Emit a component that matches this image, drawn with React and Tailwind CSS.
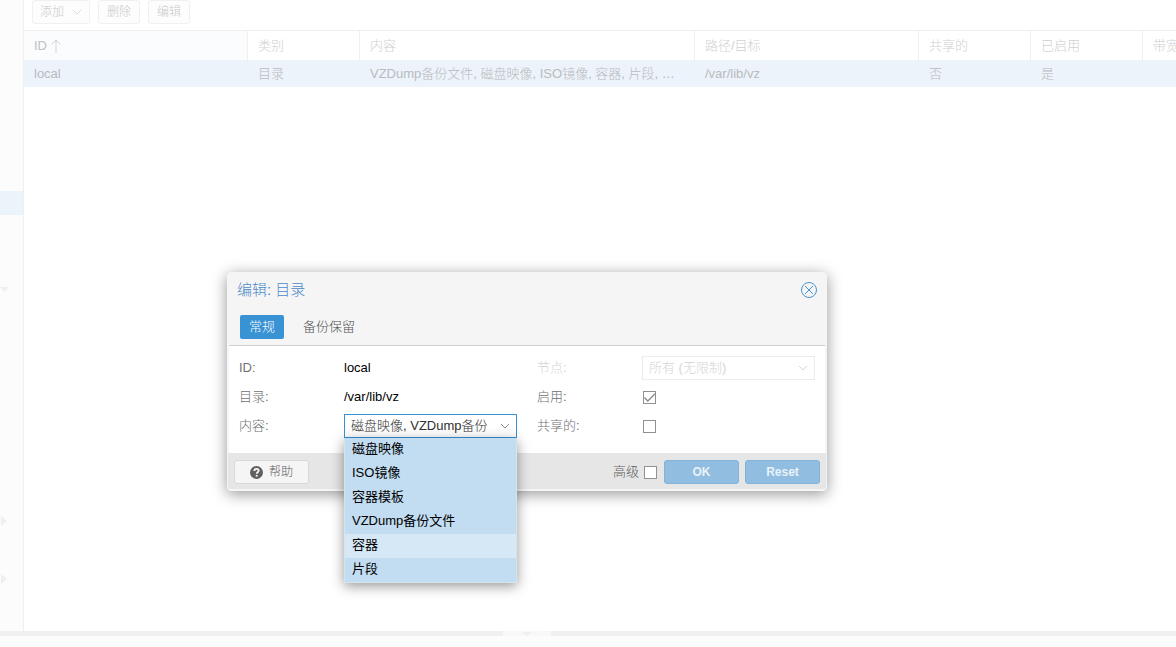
import { useState } from 'react';
import clsx from 'clsx';

const COLUMNS = [
  { key: 'type', label: '类别' },
  { key: 'content', label: '内容' },
  { key: 'path', label: '路径/目标' },
  { key: 'shared', label: '共享的' },
  { key: 'enabled', label: '已启用' },
  { key: 'bandwidth', label: '带宽限制' },
];

const STORAGES = [
  {
    id: 'local',
    type: '目录',
    content: 'VZDump备份文件, 磁盘映像, ISO镜像, 容器, 片段, 容器模板',
    path: '/var/lib/vz',
    shared: '否',
    enabled: '是',
    bandwidth: '',
  },
];

const CONTENT_TYPES = ['磁盘映像', 'ISO镜像', '容器模板', 'VZDump备份文件', '容器', '片段'];

export default function App() {
  return (
    <div className="relative flex min-h-screen flex-col overflow-hidden bg-white font-['Liberation_Sans','Noto_Sans_CJK_SC',sans-serif] text-[13px] font-light">
      <div className="flex flex-1">
        <Sidebar />
        <main className="min-w-0 flex-1 overflow-hidden">
          <Toolbar />
          <StorageTable />
        </main>
      </div>
      <div className="h-[5px] bg-[#f0f0f0] pl-[503px]">
        <div className="flex h-[5px] w-12 items-end justify-center bg-[#f8f8f8]">
          <svg width="10" height="4" viewBox="0 0 10 4" fill="#f0f0f0">
            <path d="M0 0h10L5 4z" />
          </svg>
        </div>
      </div>
      <div className="h-[11px] bg-[#fcfcfc]" />
      <EditDialog />
    </div>
  );
}

function Sidebar() {
  return (
    <aside className="flex w-6 flex-none flex-col border-r border-[#efefef] bg-[#fcfcfc] pt-[191px]">
      <div className="h-6 bg-[#ecf4fb]" />
      <svg className="mt-[72px]" width="9" height="5" viewBox="0 0 9 5" fill="#efefef">
        <path d="M0 0h9L4.500 5z" />
      </svg>
      <svg className="mt-[224px] ml-px" width="6" height="10" viewBox="0 0 6 10" fill="#efefef">
        <path d="M0 0v10l6-5z" />
      </svg>
      <svg className="mt-12 ml-px" width="6" height="10" viewBox="0 0 6 10" fill="#efefef">
        <path d="M0 0v10l6-5z" />
      </svg>
    </aside>
  );
}

function Toolbar() {
  const button = 'flex h-6 items-center rounded-[3px] border border-[#f0f0f0] bg-[#fdfdfd] px-[7px] text-xs text-[#c8c8c8]';
  return (
    <div className="flex gap-2 px-2 pb-[6px]">
      <button className={clsx(button, 'gap-2')}>
        添加
        <Chevron className="text-[#dcdcdc]" />
      </button>
      <button className={clsx(button, 'w-[42px] justify-center')}>删除</button>
      <button className={clsx(button, 'w-[42px] justify-center')}>编辑</button>
    </div>
  );
}

function StorageTable() {
  return (
    <table className="w-full table-fixed border-separate border-spacing-0 text-left">
      <colgroup>
        <col className="w-[224px]" />
        <col className="w-[112px]" />
        <col className="w-[335px]" />
        <col className="w-[224px]" />
        <col className="w-[112px]" />
        <col className="w-[112px]" />
        <col className="w-[112px]" />
      </colgroup>
      <thead>
        <tr className="h-[30px] text-[#d0d0d0]">
          <th className="border-t border-r border-[#efefef] bg-[#fbfcfe] px-[10px] py-0 font-light text-[#c0c0c0]">
            <span className="flex items-center gap-1">
              ID
              <svg width="10" height="14" viewBox="0 0 10 14" fill="none" stroke="#d4d4d4">
                <path d="M5 14V1M.5 5.500 5 1l4.500 4.500" />
              </svg>
            </span>
          </th>
          {COLUMNS.map((col) => (
            <th key={col.key} className="border-t border-r border-[#efefef] px-[10px] py-0 font-light">
              {col.label}
            </th>
          ))}
        </tr>
      </thead>
      <tbody>
        {STORAGES.map((row) => (
          <tr key={row.id} className="h-[27px] bg-[#ecf3fa] text-[#b8bbbe]">
            <td className="px-[10px] py-0">{row.id}</td>
            {COLUMNS.map((col) => (
              <td key={col.key} className="truncate px-[10px] py-0">{row[col.key]}</td>
            ))}
          </tr>
        ))}
      </tbody>
    </table>
  );
}

function EditDialog() {
  const [enabled, setEnabled] = useState(true);
  const [shared, setShared] = useState(false);
  const [advanced, setAdvanced] = useState(false);

  return (
    <div
      role="dialog"
      aria-labelledby="dialog-title"
      className="absolute top-[272px] left-[227px] w-[600px] rounded border border-[#f5f5f5] bg-[#f5f5f5] shadow-[0_3px_15px_rgba(0,0,0,0.42)]"
    >
      <header className="flex h-[35px] items-center justify-between px-[9px]">
        <h1 id="dialog-title" className="text-[15px] text-[#4a8ac8]">编辑: 目录</h1>
        <button aria-label="关闭" className="flex h-[17px] items-start">
          <svg width="16" height="16" viewBox="0 0 16 16" fill="none" stroke="#4a94cf">
            <circle cx="8" cy="8" r="7.500" />
            <path d="m4 4 8 8m0-8-8 8" />
          </svg>
        </button>
      </header>

      <div role="tablist" className="mx-px flex gap-[10px] border-b border-[#cfcfcf] px-[11px] pt-[7px] pb-[6px]">
        <button role="tab" aria-selected="true" className="h-6 rounded-[2px] bg-[#3892d4] px-[9px] text-white">常规</button>
        <button role="tab" aria-selected="false" className="h-6 px-[9px] text-[#505050]">备份保留</button>
      </div>

      <div className="mx-px grid grid-cols-2 gap-5 bg-white px-[10px] pt-[10px] pb-[15px]">
        <div className="flex flex-col gap-[5px]">
          <Field label="ID:">
            <span className="text-black">local</span>
          </Field>
          <Field label="目录:">
            <span className="text-black">/var/lib/vz</span>
          </Field>
          <Field label="内容:" htmlFor="content">
            <ContentPicker />
          </Field>
        </div>
        <div className="flex flex-col gap-[5px]">
          <Field label="节点:" htmlFor="nodes" disabled>
            <div className="relative min-w-0 flex-1">
              <select id="nodes" disabled className="h-6 w-full appearance-none border border-[#ececec] bg-white px-[6px] text-[#d4d4d4] opacity-100">
                <option>所有 (无限制)</option>
              </select>
              <Chevron className="pointer-events-none absolute top-2 right-[7px] text-[#d4d4d4]" />
            </div>
          </Field>
          <Field label="启用:" htmlFor="enabled">
            <Checkbox id="enabled" checked={enabled} onChange={setEnabled} />
          </Field>
          <Field label="共享的:" htmlFor="shared">
            <Checkbox id="shared" checked={shared} onChange={setShared} />
          </Field>
        </div>
      </div>

      <footer className="flex items-center gap-[6px] rounded-b-[3px] border-b border-[#f5f5f5] bg-[#e6e6e6] px-[6px] pt-[7px] pb-[5px]">
        <button className="mr-auto flex h-6 w-[75px] items-center justify-center gap-[6px] rounded-[3px] border border-[#d8d8d8] bg-[#f5f5f5] text-xs text-[#606060]">
          <svg width="13" height="13" viewBox="0 0 12 12">
            <circle cx="6" cy="6" r="6" fill="#606060" />
            <path d="M4 4.700C4 3.400 4.900 2.700 6 2.700s2 .7 2 1.700c0 1.300-1.800 1.400-1.800 2.700" fill="none" stroke="#f5f5f5" strokeWidth="1.700" />
            <path d="M5.300 8.200H7v1.600H5.300z" fill="#f5f5f5" />
          </svg>
          帮助
        </button>
        <div className="mr-px flex items-center gap-1">
          <label htmlFor="advanced" className="text-[#606060]">高级</label>
          <Checkbox id="advanced" checked={advanced} onChange={setAdvanced} />
        </div>
        <button className="h-6 w-[75px] rounded-[3px] border border-[#7fb3dc] bg-[#91bde0] text-xs font-bold text-[#e9f2f9]">OK</button>
        <button className="h-6 w-[75px] rounded-[3px] border border-[#7fb3dc] bg-[#91bde0] text-xs font-bold text-[#e9f2f9]">Reset</button>
      </footer>
    </div>
  );
}

function Field({ label, htmlFor, disabled, children }) {
  return (
    <div className="flex h-6 items-center">
      <label htmlFor={htmlFor} className={clsx('w-[105px] flex-none', disabled ? 'text-[#d4d4d4]' : 'text-[#707070]')}>
        {label}
      </label>
      {children}
    </div>
  );
}

function ContentPicker() {
  const [open, setOpen] = useState(true);
  const [selected, setSelected] = useState(CONTENT_TYPES);
  const [active, setActive] = useState('容器');

  const toggle = (item) =>
    setSelected((prev) => (prev.includes(item) ? prev.filter((i) => i !== item) : [...prev, item]));

  return (
    <div className="relative min-w-0 flex-1">
      <div className="flex h-6 items-center border border-[#3892d4] bg-white px-[6px]">
        <input
          id="content"
          role="combobox"
          aria-expanded={open}
          aria-controls="content-list"
          readOnly
          defaultValue="磁盘映像, VZDump备份"
          className="min-w-0 flex-1 text-[#303030] outline-none"
        />
        <button aria-label="展开" onClick={() => setOpen(!open)}>
          <Chevron className="text-[#919191]" />
        </button>
      </div>
      {open && (
        <ul
          id="content-list"
          role="listbox"
          aria-multiselectable="true"
          className="absolute top-6 left-0 z-10 w-full border-x border-b border-[#d9e3ea] bg-white font-normal text-black shadow-[0_3px_12px_rgba(0,0,0,0.42)]"
        >
          {CONTENT_TYPES.map((item) => (
            <li
              key={item}
              role="option"
              aria-selected={selected.includes(item)}
              onClick={() => toggle(item)}
              onMouseEnter={() => setActive(item)}
              className={clsx(
                'h-6 cursor-pointer px-[7px] leading-[22px]',
                item === active ? 'bg-[#d6e8f6]' : selected.includes(item) ? 'bg-[#c2dcf1]' : 'bg-white',
              )}
            >
              {item}
            </li>
          ))}
        </ul>
      )}
    </div>
  );
}

function Checkbox({ id, checked, onChange }) {
  return (
    <span className="relative ml-px flex">
      <input
        id={id}
        type="checkbox"
        checked={checked}
        onChange={(e) => onChange(e.target.checked)}
        className="h-[13px] w-[13px] appearance-none border border-[#919191] bg-white"
      />
      {checked && (
        <svg className="pointer-events-none absolute inset-0" width="13" height="13" viewBox="0 0 13 13" fill="none" stroke="#8a8a8a" strokeWidth="1.300">
          <path d="m1.500 6.500 3.300 3.500L12 2.800" />
        </svg>
      )}
    </span>
  );
}

function Chevron({ className }) {
  return (
    <svg className={className} width="10" height="8" viewBox="0 0 10 8" fill="none" stroke="currentColor">
      <path d="m1 2 4 4 4-4" />
    </svg>
  );
}
